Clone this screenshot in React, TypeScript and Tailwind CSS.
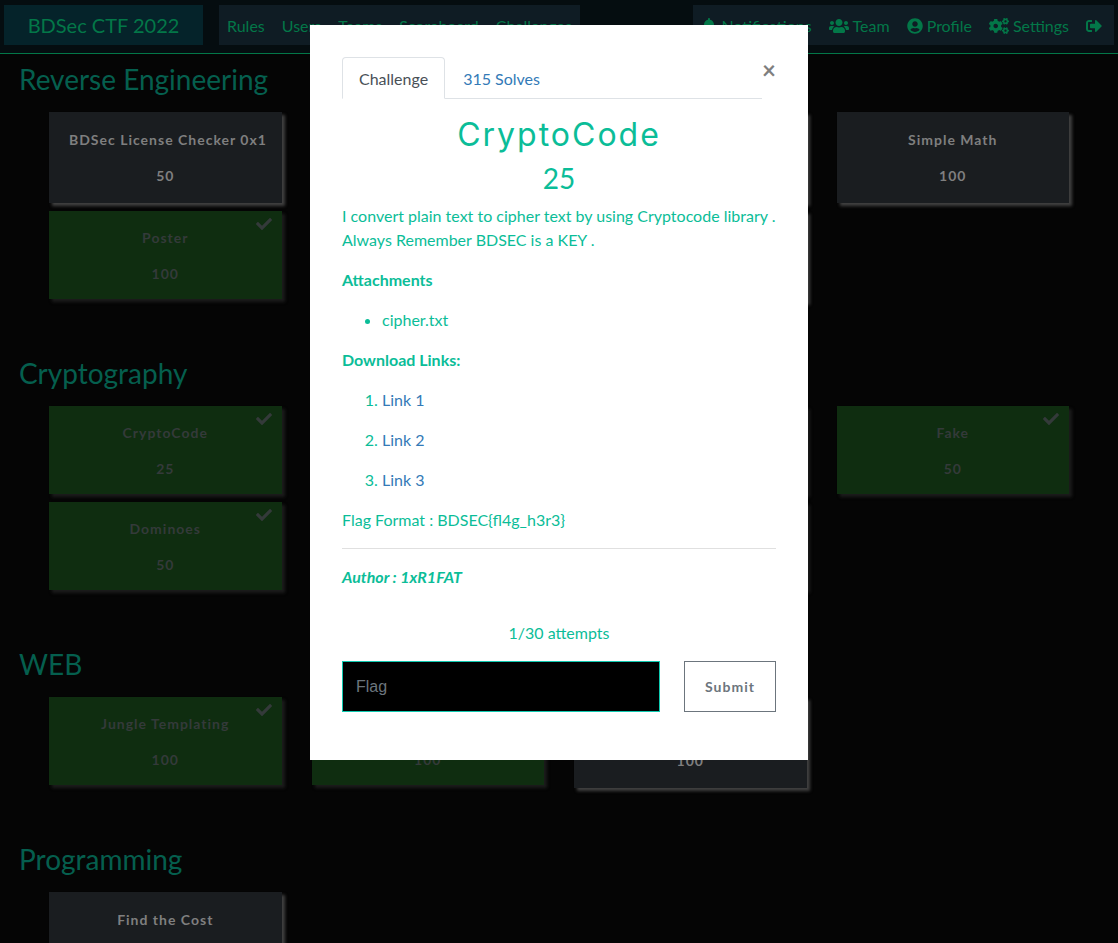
import type { ReactNode } from "react";
import { FaBell, FaCheck, FaCogs, FaSignOutAlt, FaUserCircle, FaUsers } from "react-icons/fa";

type Challenge = {
  name?: string;
  value?: number;
  solved?: boolean;
};

type Category = {
  title: string;
  challenges: Challenge[];
};

const categories: Category[] = [
  {
    title: "Reverse Engineering",
    challenges: [
      { name: "BDSec License Checker 0x1", value: 50 },
      {},
      {},
      { name: "Simple Math", value: 100 },
      { name: "Poster", value: 100, solved: true },
      {},
      {},
    ],
  },
  {
    title: "Cryptography",
    challenges: [
      { name: "CryptoCode", value: 25, solved: true },
      { solved: true },
      { solved: true },
      { name: "Fake", value: 50, solved: true },
      { name: "Dominoes", value: 50, solved: true },
      {},
      { solved: true },
    ],
  },
  {
    title: "WEB",
    challenges: [
      { name: "Jungle Templating", value: 100, solved: true },
      { value: 100, solved: true },
      { value: 100 },
    ],
  },
  {
    title: "Programming",
    challenges: [{ name: "Find the Cost", value: 100 }],
  },
];

const mainLinks = ["Rules", "Users", "Teams", "Scoreboard", "Challenges"];

function UserLink({ icon, label }: { icon: ReactNode; label: string }) {
  return (
    <a href="#" className="flex items-center gap-1">
      {icon}
      {label}
    </a>
  );
}

function Navbar() {
  return (
    <nav className="flex h-[54px] items-start border-b border-[#037748] bg-[#050d10] px-1 pt-[5px] text-base text-[#037748]">
      <a href="#" className="flex h-10 w-[199px] items-center justify-center bg-[#05232a] text-xl">
        BDSec CTF 2022
      </a>
      <div className="ml-4 flex h-10 items-center gap-[17px] bg-[#0f1c24] px-2 pt-[2px]">
        {mainLinks.map((link) => (
          <a key={link} href="#">
            {link}
          </a>
        ))}
      </div>
      <div className="ml-auto flex h-10 items-center gap-[17px] bg-[#0f1c24] pr-3 pl-2 pt-[2px]">
        <UserLink icon={<FaBell className="h-4 w-4" />} label="Notifications" />
        <UserLink icon={<FaUsers className="h-4 w-5" />} label="Team" />
        <UserLink icon={<FaUserCircle className="h-4 w-4" />} label="Profile" />
        <UserLink icon={<FaCogs className="h-4 w-5" />} label="Settings" />
        <a href="#" aria-label="Logout">
          <FaSignOutAlt className="h-4 w-4" />
        </a>
      </div>
    </nav>
  );
}

function ChallengeCard({ challenge }: { challenge: Challenge }) {
  const tone = challenge.solved
    ? "h-[88px] pt-[15px] pb-[13px] bg-[#0f2d10] text-[#343a3a] shadow-[3px_3px_3px_#1c1c1c]"
    : "h-[91px] pt-4 pb-[15px] bg-[#1a1d20] text-[#7f7f7f] shadow-[3px_3px_3px_#414141]";

  return (
    <button
      type="button"
      className={`relative min-w-0 self-start px-5 text-center text-sm leading-6 font-bold tracking-[1px] whitespace-nowrap ${tone}`}
    >
      {challenge.solved ? <FaCheck className="absolute top-[5px] right-[10px] h-4 w-4" /> : null}
      <span className="mb-3 block h-6">{challenge.name}</span>
      <span className="block h-6">{challenge.value}</span>
    </button>
  );
}

function ChallengeBoard() {
  return (
    <main className="px-[19px] pt-2">
      {categories.map((category) => (
        <section key={category.title} className="mb-[54px]">
          <h3 className="mb-4 text-[28px] leading-[34px] text-[#055f4e]">{category.title}</h3>
          <div className="grid grid-cols-4 gap-x-[30px] gap-y-2 px-[30px]">
            {category.challenges.map((challenge, index) => (
              <ChallengeCard key={index} challenge={challenge} />
            ))}
          </div>
        </section>
      ))}
    </main>
  );
}

function ChallengeModal() {
  return (
    <div className="absolute inset-0 flex items-start justify-center pt-[25px]">
      <div role="dialog" aria-label="CryptoCode" className="w-full max-w-[498px] bg-white px-8 pt-8 pb-12">
        <div className="flex items-start">
          <ul className="flex flex-1 border-b border-[#dee2e6]">
            <li>
              <a
                href="#"
                className="-mb-px block rounded-t border border-[#dee2e6] border-b-white bg-white px-4 pt-[9px] pb-[7px] text-[#495057]"
              >
                Challenge
              </a>
            </li>
            <li>
              <a href="#" className="block px-[18px] pt-[10px] pb-[7px] text-[#337ab7]">
                315 Solves
              </a>
            </li>
          </ul>
          <button
            type="button"
            aria-label="Close"
            className="h-[26px] w-[14px] text-center text-2xl leading-[26px] font-bold text-[#7f7f7f]"
          >
            ×
          </button>
        </div>

        <h2 className="mt-[18px] text-center font-['Inter',sans-serif] text-[32px] leading-9 tracking-[2px]">
          CryptoCode
        </h2>
        <h3 className="mt-2 mb-[9px] text-center text-[28px] leading-[34px]">25</h3>

        <div className="space-y-4">
          <p>
            I convert plain text to cipher text by using Cryptocode library .
            <br />
            Always Remember BDSEC is a KEY .
          </p>
          <p className="font-bold">Attachments</p>
          <ul className="list-disc pl-10">
            <li>cipher.txt</li>
          </ul>
          <p className="font-bold">Download Links:</p>
          <ol className="list-decimal space-y-4 pl-10">
            {["Link 1", "Link 2", "Link 3"].map((link) => (
              <li key={link}>
                <a href="#" className="text-[#337ab7]">
                  {link}
                </a>
              </li>
            ))}
          </ol>
          <p>{"Flag Format : BDSEC{fl4g_h3r3}"}</p>
          <hr className="border-[#e0e0e0]" />
          <p className="font-bold italic">Author : 1xR1FAT</p>
        </div>

        <p className="mt-8 mb-4 text-center">1/30 attempts</p>
        <form className="flex gap-6" onSubmit={(event) => event.preventDefault()}>
          <input
            type="text"
            aria-label="Flag"
            placeholder="Flag"
            className="h-[51px] min-w-0 flex-1 border border-[#0fc9b0] bg-black px-[13px] font-['Liberation_Sans',Arial,sans-serif] text-base text-white placeholder:text-[#6c757d]"
          />
          <button
            type="submit"
            className="h-[51px] w-[92px] border border-[#6c757d] text-sm font-bold tracking-[1px] text-[#6c757d]"
          >
            Submit
          </button>
        </form>
      </div>
    </div>
  );
}

export default function App() {
  return (
    <div className="relative h-screen overflow-hidden bg-[#050505] font-['Lato',sans-serif] text-base text-[#0bbd98]">
      <Navbar />
      <ChallengeBoard />
      <ChallengeModal />
    </div>
  );
}
